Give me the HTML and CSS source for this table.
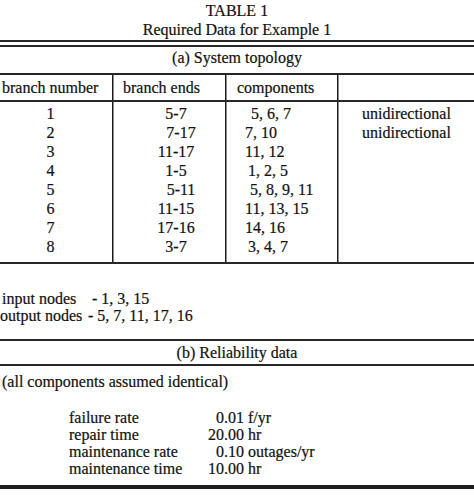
FILE: index.html
```html
<!DOCTYPE html>
<html>
<head>
<meta charset="utf-8">
<link rel="stylesheet" href="styles.css">
</head>
<body>
<div class="page">
  <div class="title">TABLE 1</div>
  <div class="subtitle">Required Data for Example 1</div>
  <div class="rule thick"></div>
  <div class="rule thin"></div>
  <div class="section">(a) System topology</div>
  <div class="rule top"></div>
  <div class="topo">
    <div class="row head">
      <div class="cell c1">branch number</div>
      <div class="cell c2">branch ends</div>
      <div class="cell c3">components</div>
      <div class="cell c4"></div>
    </div>
    <div class="rule hsep"></div>
    <div class="tbody">
      <div class="row"><div class="cell c1">1</div><div class="cell c2">5-7</div><div class="cell c3 in6">5, 6, 7</div><div class="cell c4">unidirectional</div></div>
      <div class="row"><div class="cell c1">2</div><div class="cell c2 sh">7-17</div><div class="cell c3">7, 10</div><div class="cell c4">unidirectional</div></div>
      <div class="row"><div class="cell c1">3</div><div class="cell c2">11-17</div><div class="cell c3">11, 12</div><div class="cell c4"></div></div>
      <div class="row"><div class="cell c1">4</div><div class="cell c2">1-5</div><div class="cell c3 in3">1, 2, 5</div><div class="cell c4"></div></div>
      <div class="row"><div class="cell c1">5</div><div class="cell c2 sh">5-11</div><div class="cell c3 in5">5, 8, 9, 11</div><div class="cell c4"></div></div>
      <div class="row"><div class="cell c1">6</div><div class="cell c2">11-15</div><div class="cell c3">11, 13, 15</div><div class="cell c4"></div></div>
      <div class="row"><div class="cell c1">7</div><div class="cell c2">17-16</div><div class="cell c3">14, 16</div><div class="cell c4"></div></div>
      <div class="row"><div class="cell c1">8</div><div class="cell c2">3-7</div><div class="cell c3 in3">3, 4, 7</div><div class="cell c4"></div></div>
    </div>
  </div>
  <div class="rule tend"></div>
  <div class="nodes">
    <div class="node-row in"><span class="node-label">input nodes</span><span class="node-val">- 1, 3, 15</span></div>
    <div class="node-row"><span class="node-label">output nodes</span><span class="node-val">- 5, 7, 11, 17, 16</span></div>
  </div>
  <div class="rule mid"></div>
  <div class="section b">(b) Reliability data</div>
  <div class="rule mid2"></div>
  <div class="note">(all components assumed identical)</div>
  <div class="params">
    <span class="p-label">failure rate</span><span class="p-val dec">0.01 f/yr</span>
    <span class="p-label">repair time</span><span class="p-val">20.00 hr</span>
    <span class="p-label">maintenance rate</span><span class="p-val dec">0.10 outages/yr</span>
    <span class="p-label">maintenance time</span><span class="p-val">10.00 hr</span>
  </div>
  <div class="rule bottom"></div>
</div>
</body>
</html>
```

FILE: styles.css
```css
html, body {
  margin: 0;
  padding: 0;
  background: #ffffff;
}

.page {
  width: 474px;
  font-family: "Liberation Serif", "Times New Roman", serif;
  font-size: 16px;
  color: #111111;
  -webkit-text-stroke: 0.2px #111111;
}

.title {
  text-align: center;
  line-height: 19px;
  padding-top: 1px;
}

.subtitle {
  text-align: center;
  line-height: 19px;
}

.rule {
  background: #262626;
  width: 100%;
  height: 2px;
}

.rule.thick {
  margin-top: 1px;
}

.rule.thin {
  margin-top: 3px;
}

.section {
  text-align: center;
  line-height: 20px;
  margin-top: 1px;
  height: 20px;
}

.rule.top {
  margin-top: 5px;
}

.topo {
  width: 474px;
  background-image:
    linear-gradient(#1a1a1a, #1a1a1a),
    linear-gradient(#1a1a1a, #1a1a1a),
    linear-gradient(#1a1a1a, #1a1a1a);
  background-size: 1.5px 100%;
  background-repeat: no-repeat;
  background-position: 112px 0, 225px 0, 337px 0;
}

.row {
  display: grid;
  grid-template-columns: 113px 113px 112px 136px;
  line-height: 19px;
}

.cell {
  box-sizing: border-box;
  white-space: nowrap;
  height: 19px;
}

.row.head .cell {
  height: 25px;
  padding-top: 3px;
}

.tbody {
  padding-top: 2px;
  padding-bottom: 6px;
}

.head .c1 {
  padding-left: 2px;
}

.head .c2 {
  padding-left: 10px;
}

.head .c3 {
  padding-left: 11px;
}

.tbody .c1 {
  text-align: center;
  padding-right: 12px;
}

.tbody .c2 {
  text-align: center;
  padding-left: 13px;
}

.tbody .c2.sh {
  padding-left: 23px;
}

.tbody .c3 {
  padding-left: 19px;
}

.tbody .c3.in3 {
  padding-left: 22px;
}

.tbody .c3.in5 {
  padding-left: 24px;
}

.tbody .c3.in6 {
  padding-left: 25px;
}

.tbody .c4 {
  padding-left: 24px;
}

.nodes {
  margin-top: 26px;
}

.node-row {
  display: flex;
  line-height: 17px;
}

.node-row.in {
  padding-left: 2px;
}

.node-label {
  width: 88px;
}

.node-row.in .node-label {
  width: 90px;
}

.rule.mid {
  margin-top: 15px;
}

.section.b {
  margin-top: 1px;
  line-height: 22px;
  height: 22px;
}

.note {
  line-height: 17px;
  margin-top: 7px;
  padding-left: 2px;
}

.params {
  display: grid;
  grid-template-columns: 139px auto;
  padding-left: 69px;
  margin-top: 19px;
  line-height: 17px;
}

.p-val.dec {
  padding-left: 8px;
}

.rule.bottom {
  height: 4px;
  margin-top: 8px;
  background: #1e1e1e;
}
```
